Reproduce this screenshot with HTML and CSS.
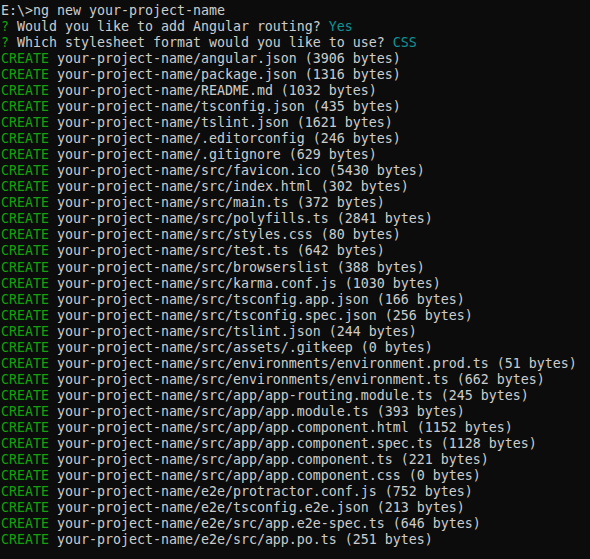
FILE: index.html
```html
<!DOCTYPE html>
<html>
<head>
<meta charset="utf-8">
<link rel="stylesheet" href="styles.css">
</head>
<body>
<pre class="term">E:\&gt;ng new your-project-name
<span class="g">?</span> Would you like to add Angular routing? <span class="c">Yes</span>
<span class="g">?</span> Which stylesheet format would you like to use? <span class="c">CSS</span>
<span class="g">CREATE</span> your-project-name/angular.json (3906 bytes)
<span class="g">CREATE</span> your-project-name/package.json (1316 bytes)
<span class="g">CREATE</span> your-project-name/README.md (1032 bytes)
<span class="g">CREATE</span> your-project-name/tsconfig.json (435 bytes)
<span class="g">CREATE</span> your-project-name/tslint.json (1621 bytes)
<span class="g">CREATE</span> your-project-name/.editorconfig (246 bytes)
<span class="g">CREATE</span> your-project-name/.gitignore (629 bytes)
<span class="g">CREATE</span> your-project-name/src/favicon.ico (5430 bytes)
<span class="g">CREATE</span> your-project-name/src/index.html (302 bytes)
<span class="g">CREATE</span> your-project-name/src/main.ts (372 bytes)
<span class="g">CREATE</span> your-project-name/src/polyfills.ts (2841 bytes)
<span class="g">CREATE</span> your-project-name/src/styles.css (80 bytes)
<span class="g">CREATE</span> your-project-name/src/test.ts (642 bytes)
<span class="g">CREATE</span> your-project-name/src/browserslist (388 bytes)
<span class="g">CREATE</span> your-project-name/src/karma.conf.js (1030 bytes)
<span class="g">CREATE</span> your-project-name/src/tsconfig.app.json (166 bytes)
<span class="g">CREATE</span> your-project-name/src/tsconfig.spec.json (256 bytes)
<span class="g">CREATE</span> your-project-name/src/tslint.json (244 bytes)
<span class="g">CREATE</span> your-project-name/src/assets/.gitkeep (0 bytes)
<span class="g">CREATE</span> your-project-name/src/environments/environment.prod.ts (51 bytes)
<span class="g">CREATE</span> your-project-name/src/environments/environment.ts (662 bytes)
<span class="g">CREATE</span> your-project-name/src/app/app-routing.module.ts (245 bytes)
<span class="g">CREATE</span> your-project-name/src/app/app.module.ts (393 bytes)
<span class="g">CREATE</span> your-project-name/src/app/app.component.html (1152 bytes)
<span class="g">CREATE</span> your-project-name/src/app/app.component.spec.ts (1128 bytes)
<span class="g">CREATE</span> your-project-name/src/app/app.component.ts (221 bytes)
<span class="g">CREATE</span> your-project-name/src/app/app.component.css (0 bytes)
<span class="g">CREATE</span> your-project-name/e2e/protractor.conf.js (752 bytes)
<span class="g">CREATE</span> your-project-name/e2e/tsconfig.e2e.json (213 bytes)
<span class="g">CREATE</span> your-project-name/e2e/src/app.e2e-spec.ts (646 bytes)
<span class="g">CREATE</span> your-project-name/e2e/src/app.po.ts (251 bytes)</pre>
</body>
</html>
```
FILE: styles.css
```css
html, body {
  margin: 0;
  padding: 0;
  background: #0c0c0c;
  height: 100%;
}
.term {
  margin: 0;
  padding: 3px 0 0 1px;
  font-family: "DejaVu Sans Mono", monospace;
  font-size: 13.29px;
  line-height: 16.03px;
  color: #cccccc;
  white-space: pre;
}
.g { color: #13a10e; }
.c { color: #0f9595; }
```
